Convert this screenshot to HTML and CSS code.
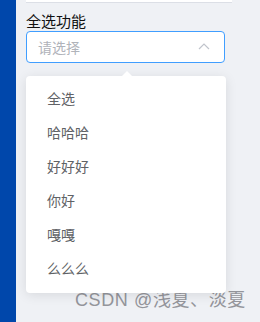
FILE: index.html
```html
<!DOCTYPE html>
<html lang="zh-CN">
<head>
    <meta charset="UTF-8">
    <title>全选功能</title>
    <link rel="stylesheet" href="styles.css">
</head>
<body>
    <div class="sidebar"></div>
    <div class="main">
        <div class="top-card"></div>
        <div class="label">全选功能</div>
        <div class="select">
            <span class="placeholder">请选择</span>
            <svg class="arrow" width="12" height="8" viewBox="0 0 12 8">
                <path d="M1 7 L6 2 L11 7" fill="none" stroke="#c0c4cc" stroke-width="1.2"/>
            </svg>
        </div>
        <div class="dropdown">
            <span class="popper-arrow"></span>
            <ul class="options">
                <li>全选</li>
                <li>哈哈哈</li>
                <li>好好好</li>
                <li>你好</li>
                <li>嘎嘎</li>
                <li>么么么</li>
            </ul>
        </div>
        <div class="watermark">CSDN @浅夏、淡夏</div>
    </div>
</body>
</html>
```
FILE: styles.css
```css
body {
    margin: 0;
    height: 322px;
    overflow: hidden;
    display: flex;
    background: #eff1f5;
    font-family: "Noto Sans CJK SC", "Liberation Sans", sans-serif;
}

.sidebar {
    width: 16px;
    background: #0047ab;
    flex-shrink: 0;
}

.main {
    flex: 1;
    padding: 0 0 0 10px;
}

.top-card {
    width: 206px;
    height: 2px;
    background: #ffffff;
    border-bottom: 1px solid #dcdfe6;
}

.label {
    font-size: 15px;
    line-height: 18px;
    color: #111;
    margin-top: 9px;
}

.select {
    width: 199px;
    height: 32px;
    margin-top: 1px;
    border: 1px solid #409eff;
    border-radius: 4px;
    background: #fff;
    display: flex;
    align-items: center;
    justify-content: space-between;
    padding: 0 14px 0 11px;
    box-sizing: border-box;
}

.placeholder {
    font-size: 14px;
    color: #b0b3ba;
}

.arrow {
    margin-top: -2px;
}

.dropdown {
    position: relative;
    width: 200px;
    margin-top: 13px;
    background: #fff;
    border-radius: 4px;
    box-shadow: 0 2px 12px rgba(0, 0, 0, 0.1);
}

.popper-arrow {
    position: absolute;
    top: -5px;
    left: 96px;
    width: 0;
    height: 0;
    border-left: 5px solid transparent;
    border-right: 5px solid transparent;
    border-bottom: 5px solid #fff;
}

.options {
    list-style: none;
    margin: 0;
    padding: 5px 0 8px;
}

.options li {
    height: 34px;
    line-height: 34px;
    padding-left: 21px;
    font-size: 14px;
    color: #606266;
}

.watermark {
    margin-top: -4px;
    padding-left: 49px;
    font-size: 18px;
    line-height: 22px;
    letter-spacing: 0.6px;
    color: #94959b;
    font-family: "Liberation Sans", "Noto Sans CJK SC", sans-serif;
}
```
